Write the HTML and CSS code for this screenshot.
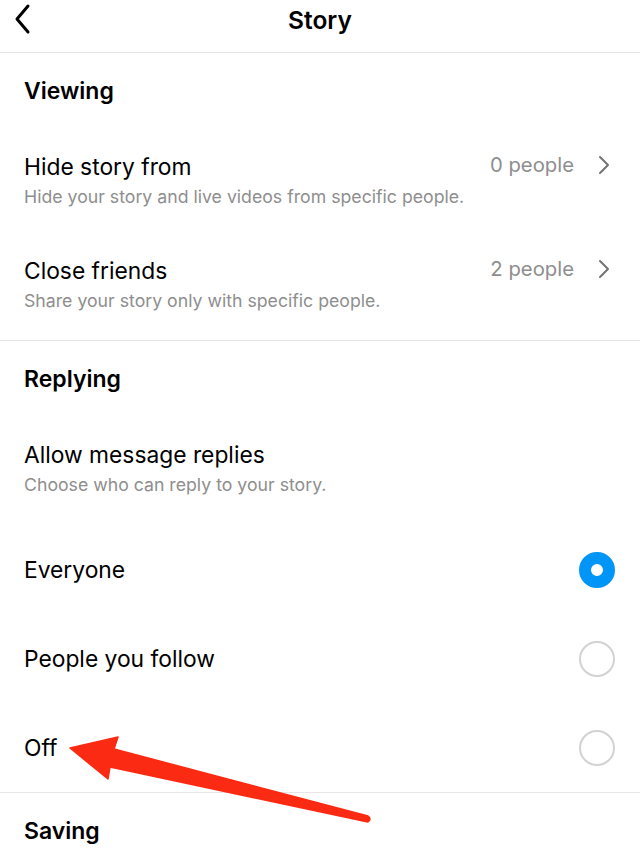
FILE: index.html
```html
<!DOCTYPE html>
<html lang="en">

<head>
    <meta charset="UTF-8">
    <meta name="viewport" content="width=device-width, initial-scale=1.0">
    <title>Story</title>
    <link rel="stylesheet" href="styles.css">
</head>

<body>
    <div class="header">
        <a href="#" class="back-button">
            <svg width="20" height="32" viewBox="0 0 20 32">
                <path d="M15 3 L4 16 L15 29" fill="none" stroke="#000" stroke-width="3" stroke-linecap="round" stroke-linejoin="round" />
            </svg>
        </a>
        <h1>Story</h1>
    </div>

    <div class="section">
        <h2 class="section-title">Viewing</h2>

        <div class="setting-row">
            <div class="setting-text">
                <div class="setting-name">Hide story from</div>
                <div class="setting-desc">Hide your story and live videos from specific people.</div>
            </div>
            <div class="setting-value">
                <span>0 people</span>
                <svg width="14" height="20" viewBox="0 0 14 20">
                    <path d="M3 2 L11 10 L3 18" fill="none" stroke="#737373" stroke-width="2" stroke-linecap="round" stroke-linejoin="round" />
                </svg>
            </div>
        </div>

        <div class="setting-row last-row">
            <div class="setting-text">
                <div class="setting-name">Close friends</div>
                <div class="setting-desc">Share your story only with specific people.</div>
            </div>
            <div class="setting-value">
                <span>2 people</span>
                <svg width="14" height="20" viewBox="0 0 14 20">
                    <path d="M3 2 L11 10 L3 18" fill="none" stroke="#737373" stroke-width="2" stroke-linecap="round" stroke-linejoin="round" />
                </svg>
            </div>
        </div>
    </div>

    <div class="section">
        <h2 class="section-title">Replying</h2>

        <div class="setting-row intro-row">
            <div class="setting-text">
                <div class="setting-name">Allow message replies</div>
                <div class="setting-desc">Choose who can reply to your story.</div>
            </div>
        </div>

        <label class="option-row">
            <span>Everyone</span>
            <span class="radio checked"></span>
        </label>
        <label class="option-row">
            <span>People you follow</span>
            <span class="radio"></span>
        </label>
        <label class="option-row">
            <span>Off</span>
            <span class="radio"></span>
        </label>
    </div>

    <div class="section">
        <h2 class="section-title">Saving</h2>
    </div>

    <!-- red pointer arrow drawn over the list -->
    <svg class="pointer" width="640" height="853" viewBox="0 0 640 853">
        <path d="M70 748 L118 737 L114 749 L368 816 Q372 819 368 822 L110 767 L108 779 Z" fill="#fb2a12" stroke="#fb2a12" stroke-width="1.5" stroke-linejoin="round" />
    </svg>
</body>

</html>
```

FILE: styles.css
```css
body {
    font-family: Inter, Roboto, "Liberation Sans", sans-serif;
    margin: 0;
    padding: 0;
    background-color: #fff;
    color: #000;
    width: 640px;
    overflow: hidden;
}

.header {
    height: 52px;
    display: flex;
    align-items: center;
    justify-content: center;
    position: relative;
    border-bottom: 1px solid #e6e6e6;
}

.header h1 {
    margin: 0;
    font-size: 24.5px;
    font-weight: 600;
    padding-bottom: 12px;
}

.back-button {
    position: absolute;
    left: 13px;
    top: 3px;
}

.section {
    border-bottom: 1px solid #e6e6e6;
}

.section:last-of-type {
    border-bottom: none;
}

.section-title {
    margin: 0;
    height: 76px;
    display: flex;
    align-items: center;
    padding: 0 24px;
    font-size: 23px;
    font-weight: 600;
}

.setting-row {
    height: 104px;
    box-sizing: border-box;
    padding: 25px 31px 0 24px;
    display: flex;
    justify-content: space-between;
    align-items: flex-start;
}

.setting-row.last-row {
    height: 107px;
}

.setting-row.intro-row {
    height: 108px;
}

.setting-name {
    font-size: 22.8px;
    line-height: 26px;
}

.setting-desc {
    font-size: 17.7px;
    line-height: 20px;
    color: #8e8e8e;
    margin-top: 7px;
}

.setting-value {
    display: flex;
    align-items: center;
    gap: 23px;
    font-size: 20.3px;
    line-height: 26px;
    color: #8e8e8e;
    margin-top: -2px;
    margin-right: -2px;
}

.option-row {
    height: 89px;
    display: flex;
    align-items: center;
    justify-content: space-between;
    padding: 0 25px 0 24px;
    font-size: 22.8px;
}

.radio {
    width: 32px;
    height: 32px;
    border: 2px solid #d2d2d2;
    border-radius: 50%;
    box-sizing: content-box;
}

.radio.checked {
    width: 12px;
    height: 12px;
    border: 12px solid #0095f6;
    background: #fff;
}

.pointer {
    position: absolute;
    top: 0;
    left: 0;
    pointer-events: none;
}
```
